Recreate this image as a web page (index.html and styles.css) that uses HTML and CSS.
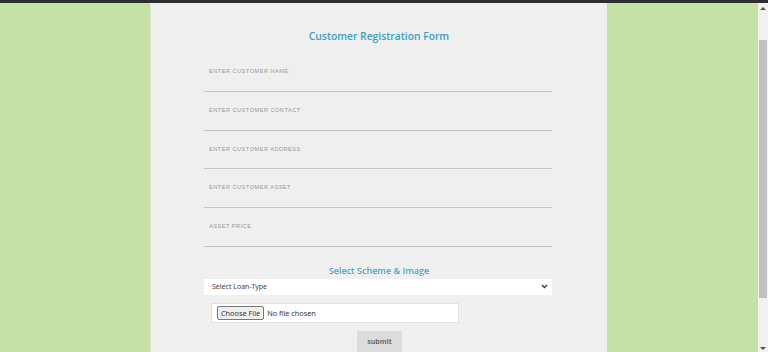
FILE: index.html
```html
<!DOCTYPE html>
<html>
	<head>
		<meta charset="utf-8">
		<title>Customer Registration</title>
		<link rel="stylesheet" href="styles.css">
	</head>
	<body>
		<div class="topbar"></div>
		<div class="page">
			<div class="main">
				<form class="panel">
					<h2 class="title">Customer Registration Form</h2>
					<div class="field"><label>Enter Customer Name</label></div>
					<div class="field"><label>Enter Customer Contact</label></div>
					<div class="field"><label>Enter Customer Address</label></div>
					<div class="field"><label>Enter Customer Asset</label></div>
					<div class="field"><label>Asset Price</label></div>

					<h3 class="subtitle">Select Scheme &amp; Image</h3>
					<div class="select">
						<span>Select Loan-Type</span>
						<svg class="chev" width="7" height="5" viewBox="0 0 7 5"><path d="M1 1 L3.5 3.5 L6 1" fill="none" stroke="#333" stroke-width="1.3"/></svg>
					</div>
					<div class="file">
						<span class="file-btn">Choose File</span>
						<span class="file-txt">No file chosen</span>
					</div>
					<div class="actions">
						<span class="submit">submit</span>
					</div>
				</form>
			</div>
			<!-- 滚动条 -->
			<div class="scroll">
				<div class="arrow up"></div>
				<div class="thumb"></div>
				<div class="arrow down"></div>
			</div>
		</div>
	</body>
</html>
```

FILE: styles.css
```css
*{
	margin: 0;
	padding: 0;
	box-sizing: border-box;
}
html,body{
	height: 100%;
	overflow: hidden;
}
body{
	font-family: "Open Sans", "Noto Sans", sans-serif;
	background-color: #c5e1a5;
}
.topbar{
	height: 3px;
	background-color: #2e2e2e;
}
.page{
	display: flex;
	height: 349px;
}
.main{
	flex: 1;
	background-color: #c5e1a5;
}
.panel{
	width: 457px;
	height: 100%;
	margin-left: 150px;
	padding-top: 25px;
	background-color: #efefef;
	border-left: 1px solid #dbe9cf;
}
.title{
	text-align: center;
	font-size: 10.3px;
	line-height: 16px;
	font-weight: 600;
	color: #3aa0c2;
	margin-bottom: 9px;
}
.field{
	width: 348px;
	height: 38.75px;
	margin-left: 53px;
	padding: 14px 0 0 5px;
	border-bottom: 1px solid #c4c4c4;
}
.field label{
	display: block;
	font-family: "Liberation Sans", Arial, sans-serif;
	font-size: 5.6px;
	line-height: 8px;
	letter-spacing: 0.5px;
	text-transform: uppercase;
	color: #999;
}
.subtitle{
	text-align: center;
	font-size: 9px;
	line-height: 14px;
	font-weight: 600;
	color: #4aa8c4;
	margin-top: 17px;
}
.select{
	display: flex;
	align-items: center;
	justify-content: space-between;
	width: 348px;
	height: 16px;
	margin: 1px 0 0 53px;
	padding: 0 4px 0 8px;
	background-color: #fff;
	font-family: "Noto Sans", sans-serif;
	font-size: 7px;
	color: #444;
}
.file{
	display: flex;
	align-items: center;
	width: 248px;
	height: 20px;
	margin: 8px 0 0 60px;
	padding-left: 5px;
	background-color: #fff;
	border: 1px solid #e2e2e2;
	font-family: "Noto Sans", sans-serif;
	font-size: 7.3px;
	color: #333;
}
.file-btn{
	padding: 1px 3px;
	background-color: #efefef;
	border: 1px solid #767676;
	border-radius: 2px;
	line-height: 10px;
}
.file-txt{
	margin-left: 3px;
}
.actions{
	display: flex;
	justify-content: center;
	margin-top: 8px;
}
.submit{
	display: block;
	width: 45px;
	height: 24px;
	margin-left: 1px;
	padding-top: 6px;
	text-align: center;
	background-color: #dcdcdc;
	font-size: 7px;
	font-weight: 700;
	color: #6b6b6b;
}
.scroll{
	display: flex;
	flex-direction: column;
	width: 10px;
	background-color: #f1f1f1;
}
.arrow{
	height: 10px;
	position: relative;
}
.arrow.up::after,.arrow.down::after{
	content: "";
	position: absolute;
	left: 2px;
	border-left: 3px solid transparent;
	border-right: 3px solid transparent;
}
.arrow.up::after{
	top: 4px;
	border-bottom: 3px solid #505050;
}
.arrow.down::after{
	bottom: 2px;
	border-top: 3px solid #505050;
}
.thumb{
	height: 258px;
	margin: 27px 1px 0;
	background-color: #c1c1c1;
}
.arrow.down{
	margin-top: auto;
}
```
